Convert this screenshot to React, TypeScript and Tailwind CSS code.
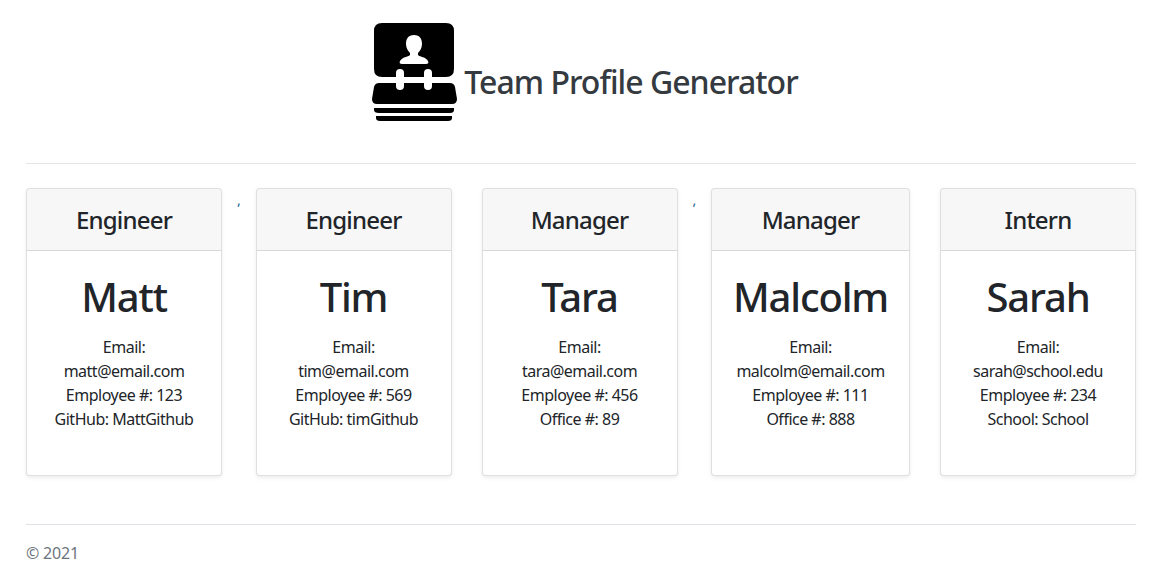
const employees = [
  { role: 'Engineer', name: 'Matt', email: 'matt@email.com', id: 123, extra: 'GitHub: MattGithub', width: 'w-[196px]', comma: true },
  { role: 'Engineer', name: 'Tim', email: 'tim@email.com', id: 569, extra: 'GitHub: timGithub', width: 'w-[196px]', comma: false },
  { role: 'Manager', name: 'Tara', email: 'tara@email.com', id: 456, extra: 'Office #: 89', width: 'w-[196px]', comma: true },
  { role: 'Manager', name: 'Malcolm', email: 'malcolm@email.com', id: 111, extra: 'Office #: 888', width: 'w-[199px]', comma: false },
  { role: 'Intern', name: 'Sarah', email: 'sarah@school.edu', id: 234, extra: 'School: School', width: 'w-[196px]', comma: false },
]

function Logo() {
  return (
    <svg viewBox="0 0 85 99" className="w-[85px] h-[99px] shrink-0" aria-hidden="true">
      <path
        fillRule="evenodd"
        d="M10 0H74Q82 0 82 8V46Q82 54 74 54H10Q2 54 2 46V8Q2 0 10 0ZM42 12C36 12 34 16 34 21C34 25 36 28 38 30V32C36 34 30 34 28 38C27 40 28 41 30 41H54C56 41 57 40 56 38C54 34 48 34 46 32V30C48 28 50 25 50 21C50 16 48 12 42 12Z"
      />
      <path d="M7 60H78Q82 60 83 64L85 76Q85 81 80 81H5Q0 81 0 76L2 64Q3 60 7 60Z" />
      <rect x="24" y="46" width="8" height="21" rx="4" fill="#fff" />
      <rect x="52" y="46" width="8" height="21" rx="4" fill="#fff" />
      <path d="M2 85H82V87Q82 90 78 90H7Q2 90 2 87Z" />
      <path d="M4 93H80V95Q80 98 76 98H8Q4 98 4 95Z" />
    </svg>
  )
}

function EmployeeCard({ role, name, email, id, extra, width }: { role: string; name: string; email: string; id: number; extra: string; width: string }) {
  return (
    <div className={`${width} h-[288px] shrink-0 mx-[15px] bg-white border border-black/[.125] rounded shadow-[0_2px_4px_rgba(0,0,0,0.075)] text-center overflow-hidden`}>
      <div className="h-[62px] flex items-center justify-center bg-black/[.03] border-b border-black/[.125] text-[24px] font-[550] tracking-[-0.8px] text-[#212529]">
        {role}
      </div>
      <div className="pt-[22px] text-[#212529]">
        <h2 className="text-[40px] leading-[48px] font-[550] tracking-[-1.15px]">{name}</h2>
        <div className="mt-[14px] text-[16px] leading-[24px] tracking-[-0.5px]">
          <p>Email:</p>
          <p>{email}</p>
          <p>Employee #: {id}</p>
          <p>{extra}</p>
        </div>
      </div>
    </div>
  )
}

export default function App() {
  return (
    <div className="min-h-[575px] bg-white font-['Noto_Sans',sans-serif] overflow-hidden">
      <header className="flex items-end justify-center h-[163px] pt-[23px] pb-[41px]">
        <Logo />
        <h1 className="ml-[7px] mr-[1px] mb-[21px] text-[32px] leading-[38px] font-medium tracking-[-0.98px] text-[#343a40]">
          Team Profile Generator
        </h1>
      </header>
      <div className="ml-[26px] w-[1110px] border-t border-[#e5e5e5]" />
      <main className="flex mx-[11px] mt-[24px]">
        {employees.map((e) => (
          <div key={e.name} className="flex">
            <EmployeeCard {...e} />
            {e.comma && <span className="w-[3.5px] text-[14px] leading-[24px] text-[#1c5f8f]">,</span>}
          </div>
        ))}
      </main>
      <footer className="ml-[26px] w-[1110px] mt-[48px] border-t border-[#dee2e6] pt-[16px] text-[16px] leading-[24px] tracking-[-0.2px] text-[#6c757d]">
        © 2021
      </footer>
    </div>
  )
}
